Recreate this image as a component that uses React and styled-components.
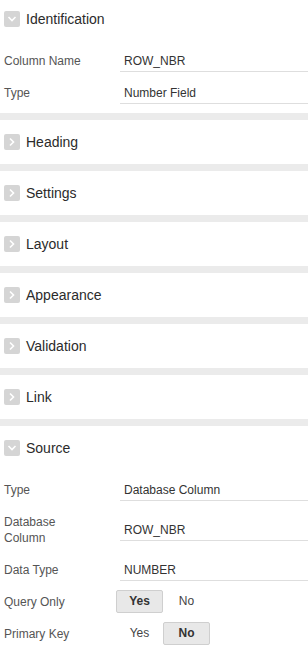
import styled, { createGlobalStyle } from "styled-components";

const GlobalStyle = createGlobalStyle`
  body {
    margin: 0;
    background: #fff;
    font-family: "Liberation Sans", Arial, sans-serif;
    overflow: hidden;
  }
`;

const Page = styled.div`
  width: 308px;
  margin-top: -3px;
`;

const Section = styled.section`
  background: #fff;
  border-top: ${(p) => (p.$first ? "none" : "7px solid #ebebeb")};
`;

const Header = styled.div`
  height: 44px;
  display: flex;
  align-items: center;
  gap: 6px;
  padding-left: 4px;
  font-size: 14px;
  color: #2b2b2b;
`;

const Toggle = styled.span`
  width: 16px;
  height: 16px;
  border-radius: 2px;
  background: #d5d5d5;
  display: flex;
  align-items: center;
  justify-content: center;
`;

const Body = styled.div`
  padding: 3px 0 5px;
`;

const Row = styled.div`
  display: flex;
  align-items: center;
  padding: 4px 0;
`;

const Label = styled.div`
  width: 116px;
  flex: none;
  padding: 5px 0 3px 4px;
  font-size: 12px;
  line-height: 16px;
  color: #555;
`;

const Field = styled.div`
  flex: 1;
  height: 24px;
  line-height: 24px;
  padding: 1px 0 0 4px;
  border-bottom: 1px solid #dedede;
  box-sizing: border-box;
  font-size: 12px;
  color: #333;
`;

const Segmented = styled.div`
  display: flex;
  margin-left: -4px;
`;

const Segment = styled.div`
  width: 47px;
  height: 23px;
  box-sizing: border-box;
  display: flex;
  align-items: center;
  justify-content: center;
  font-size: 12px;
  color: ${(p) => (p.$active ? "#333" : "#444")};
  font-weight: ${(p) => (p.$active ? "bold" : "normal")};
  background: ${(p) => (p.$active ? "#e8e8e8" : "transparent")};
  border: 1px solid ${(p) => (p.$active ? "#cfcfcf" : "transparent")};
  border-radius: 2px;
`;

const Chevron = ({ open }) => (
  <svg width="12" height="12" viewBox="0 0 12 12">
    <polyline
      points={open ? "2.5,4 6,7.5 9.5,4" : "4,2.5 7.5,6 4,9.5"}
      fill="none"
      stroke="#fff"
      strokeWidth="1.6"
    />
  </svg>
);

const Panel = ({ title, open, first, children }) => (
  <Section $first={first}>
    <Header>
      <Toggle>
        <Chevron open={open} />
      </Toggle>
      {title}
    </Header>
    {open && <Body>{children}</Body>}
  </Section>
);

const Switch = ({ value }) => (
  <Segmented>
    <Segment $active={value}>Yes</Segment>
    <Segment $active={!value}>No</Segment>
  </Segmented>
);

const collapsed = ["Heading", "Settings", "Layout", "Appearance", "Validation", "Link"];

export default function App() {
  return (
    <>
      <GlobalStyle />
      <Page>
        <Panel title="Identification" open first>
          <Row>
            <Label>Column Name</Label>
            <Field>ROW_NBR</Field>
          </Row>
          <Row>
            <Label>Type</Label>
            <Field>Number Field</Field>
          </Row>
        </Panel>
        {collapsed.map((t) => (
          <Panel key={t} title={t} />
        ))}
        <Panel title="Source" open>
          <Row>
            <Label>Type</Label>
            <Field>Database Column</Field>
          </Row>
          <Row>
            <Label>
              Database
              <br />
              Column
            </Label>
            <Field>ROW_NBR</Field>
          </Row>
          <Row>
            <Label>Data Type</Label>
            <Field>NUMBER</Field>
          </Row>
          <Row>
            <Label>Query Only</Label>
            <Switch value={true} />
          </Row>
          <Row>
            <Label>Primary Key</Label>
            <Switch value={false} />
          </Row>
        </Panel>
      </Page>
    </>
  );
}
